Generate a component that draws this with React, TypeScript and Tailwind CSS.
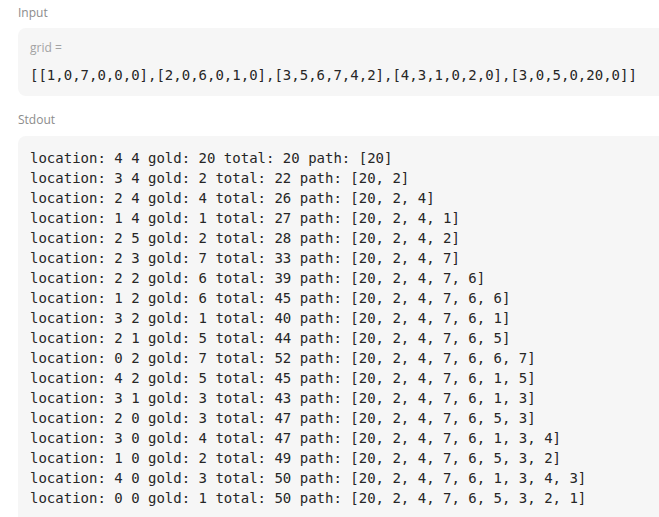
const grid = "[[1,0,7,0,0,0],[2,0,6,0,1,0],[3,5,6,7,4,2],[4,3,1,0,2,0],[3,0,5,0,20,0]]";

const stdout = [
  "location: 4 4 gold: 20 total: 20 path: [20]",
  "location: 3 4 gold: 2 total: 22 path: [20, 2]",
  "location: 2 4 gold: 4 total: 26 path: [20, 2, 4]",
  "location: 1 4 gold: 1 total: 27 path: [20, 2, 4, 1]",
  "location: 2 5 gold: 2 total: 28 path: [20, 2, 4, 2]",
  "location: 2 3 gold: 7 total: 33 path: [20, 2, 4, 7]",
  "location: 2 2 gold: 6 total: 39 path: [20, 2, 4, 7, 6]",
  "location: 1 2 gold: 6 total: 45 path: [20, 2, 4, 7, 6, 6]",
  "location: 3 2 gold: 1 total: 40 path: [20, 2, 4, 7, 6, 1]",
  "location: 2 1 gold: 5 total: 44 path: [20, 2, 4, 7, 6, 5]",
  "location: 0 2 gold: 7 total: 52 path: [20, 2, 4, 7, 6, 6, 7]",
  "location: 4 2 gold: 5 total: 45 path: [20, 2, 4, 7, 6, 1, 5]",
  "location: 3 1 gold: 3 total: 43 path: [20, 2, 4, 7, 6, 1, 3]",
  "location: 2 0 gold: 3 total: 47 path: [20, 2, 4, 7, 6, 5, 3]",
  "location: 3 0 gold: 4 total: 47 path: [20, 2, 4, 7, 6, 1, 3, 4]",
  "location: 1 0 gold: 2 total: 49 path: [20, 2, 4, 7, 6, 5, 3, 2]",
  "location: 4 0 gold: 3 total: 50 path: [20, 2, 4, 7, 6, 1, 3, 4, 3]",
  "location: 0 0 gold: 1 total: 50 path: [20, 2, 4, 7, 6, 5, 3, 2, 1]",
];

const mono = "font-['DejaVu_Sans_Mono',monospace] text-[14px] leading-5 text-[#262626] whitespace-pre";

export default function App() {
  return (
    <div className="w-[659px] h-[517px] overflow-hidden bg-white pl-[18px] pt-[5px] font-['Open_Sans',sans-serif]">
      <div className="text-xs leading-4 font-medium text-[#8c8c8c] mb-[7px]">Input</div>
      <div className="w-[680px] rounded-lg bg-[#f6f6f6] pl-3 pt-3 pb-[11px]">
        <div className="text-xs leading-4 text-[#a3a3a3] mb-[9px]">grid =</div>
        <div className={mono}>{grid}</div>
      </div>

      <div className="mt-4 text-xs leading-4 font-medium text-[#8c8c8c] mb-2">Stdout</div>
      <div className="w-[680px] h-[420px] rounded-lg bg-[#f6f6f6] pl-3 pt-3">
        {stdout.map((line, i) => (
          <div key={i} className={mono}>{line}</div>
        ))}
      </div>
    </div>
  );
}
